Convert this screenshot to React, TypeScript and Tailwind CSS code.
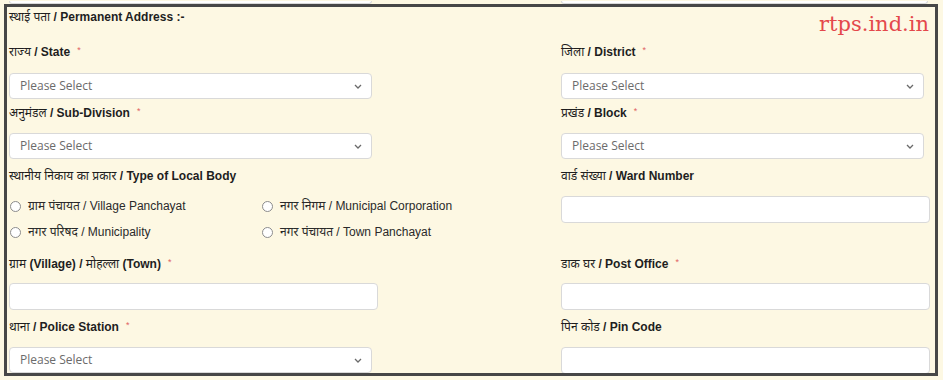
import type { ReactNode } from "react";

const sans = "font-['Liberation_Sans','Noto_Sans',Arial,sans-serif]";

interface LabelProps {
  children: ReactNode;
  req?: boolean;
}

const Label = ({ children, req }: LabelProps) => (
  <div className="h-[18px] leading-[18px] text-[12px] text-[#1e1e1e] whitespace-nowrap">
    {children}
    {req && (
      <span className="relative top-[-3px] ml-[7px] text-[9px] text-[#e06262]">*</span>
    )}
  </div>
);

const Chevron = () => (
  <svg width="8" height="5" viewBox="0 0 8 5" className="shrink-0">
    <polyline points="1,1 4,4 7,1" fill="none" stroke="#6a6a6a" strokeWidth="1.3" />
  </svg>
);

const Select = () => (
  <div className="w-[363px] h-[26px] bg-white border border-[#d9d9d9] rounded-[4px] flex items-center justify-between pl-[10px] pr-[9px]">
    <span className="font-['Open_Sans','DejaVu_Sans',sans-serif] text-[12px] text-[#6b6b6b]">
      Please Select
    </span>
    <Chevron />
  </div>
);

const Input = ({ w = "w-[369px]" }: { w?: string }) => (
  <div className={`${w} h-[27px] bg-white border border-[#d9d9d9] rounded-[4px]`} />
);

const Radio = ({ hi, en }: { hi: string; en: string }) => (
  <div className="h-[26px] flex items-center text-[12px] text-[#2a2a2a] whitespace-nowrap">
    <span className="ml-[1px] w-[11px] h-[11px] rounded-full border border-[#8c8c8c] bg-white" />
    <span className="ml-[7px]">
      {hi} / {en}
    </span>
  </div>
);

export default function App() {
  return (
    <div className={`w-[943px] h-[380px] bg-[#fdf8e3] overflow-hidden ${sans}`}>
      {/* bottoms of the fields from the previous section */}
      <div className="h-[4px] flex items-end">
        <div className="ml-[9px] w-[363px] h-[3px] bg-white border-x border-b border-[#d9d9d9] rounded-b-[4px]" />
        <div className="ml-[189px] w-[367px] h-[3px] bg-white border-x border-b border-[#d9d9d9] rounded-b-[4px]" />
      </div>

      <div className="relative ml-[4px] w-[934px] h-[372px] border-[3px] border-[#474747] overflow-hidden pl-[2px]">
        <div className="absolute right-[6px] top-[2px] font-['DejaVu_Serif',serif] text-[21px] text-[#e4484b]">
          rtps.ind.in
        </div>

        <div className="pt-[1px]">
          <Label>
            स्थाई पता <b>/ Permanent Address :-</b>
          </Label>
        </div>

        <div className="grid grid-cols-[552px_1fr] mt-[17px]">
          <div>
            <Label req>
              राज्य <b>/ State</b>
            </Label>
            <div className="mt-[12px]">
              <Select />
            </div>
          </div>
          <div>
            <Label req>
              जिला <b>/ District</b>
            </Label>
            <div className="mt-[12px]">
              <Select />
            </div>
          </div>
        </div>

        <div className="grid grid-cols-[552px_1fr] mt-[5px]">
          <div>
            <Label req>
              अनुमंडल <b>/ Sub-Division</b>
            </Label>
            <div className="mt-[11px]">
              <Select />
            </div>
          </div>
          <div>
            <Label req>
              प्रखंड <b>/ Block</b>
            </Label>
            <div className="mt-[11px]">
              <Select />
            </div>
          </div>
        </div>

        <div className="grid grid-cols-[552px_1fr] mt-[8px]">
          <div>
            <Label>
              स्थानीय निकाय का प्रकार <b>/ Type of Local Body</b>
            </Label>
            <div className="mt-[8px] grid grid-cols-[252px_1fr]">
              <Radio hi="ग्राम पंचायत" en="Village Panchayat" />
              <Radio hi="नगर निगम" en="Municipal Corporation" />
              <Radio hi="नगर परिषद" en="Municipality" />
              <Radio hi="नगर पंचायत" en="Town Panchayat" />
            </div>
          </div>
          <div>
            <Label>
              वार्ड संख्या <b>/ Ward Number</b>
            </Label>
            <div className="mt-[11px]">
              <Input />
            </div>
          </div>
        </div>

        <div className="grid grid-cols-[552px_1fr] mt-[10px]">
          <div>
            <Label req>
              ग्राम <b>(Village) /</b> मोहल्ला <b>(Town)</b>
            </Label>
            <div className="mt-[10px]">
              <Input />
            </div>
          </div>
          <div>
            <Label req>
              डाक घर <b>/ Post Office</b>
            </Label>
            <div className="mt-[10px]">
              <Input />
            </div>
          </div>
        </div>

        <div className="grid grid-cols-[552px_1fr] mt-[8px]">
          <div>
            <Label req>
              थाना <b>/ Police Station</b>
            </Label>
            <div className="mt-[11px]">
              <Select />
            </div>
          </div>
          <div>
            <Label>
              पिन कोड <b>/ Pin Code</b>
            </Label>
            <div className="mt-[11px]">
              <Input />
            </div>
          </div>
        </div>
      </div>
    </div>
  );
}
